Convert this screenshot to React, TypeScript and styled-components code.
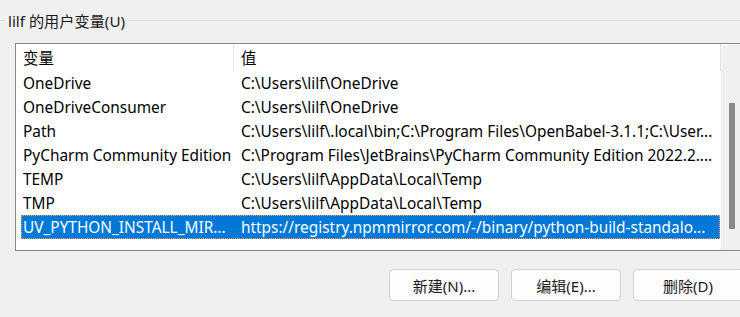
import React from 'react';
import styled, { createGlobalStyle } from 'styled-components';

const GlobalStyle = createGlobalStyle`
  html, body {
    margin: 0;
    padding: 0;
    background: #f0f0f0;
    overflow: hidden;
  }
  body {
    font-family: "Noto Sans", "Noto Sans CJK SC", sans-serif;
    color: #000;
  }
`;

interface Variable {
  name: string;
  value: string;
}

const variables: Variable[] = [
  { name: 'OneDrive', value: 'C:\\Users\\lilf\\OneDrive' },
  { name: 'OneDriveConsumer', value: 'C:\\Users\\lilf\\OneDrive' },
  { name: 'Path', value: 'C:\\Users\\lilf\\.local\\bin;C:\\Program Files\\OpenBabel-3.1.1;C:\\User...' },
  { name: 'PyCharm Community Edition', value: 'C:\\Program Files\\JetBrains\\PyCharm Community Edition 2022.2....' },
  { name: 'TEMP', value: 'C:\\Users\\lilf\\AppData\\Local\\Temp' },
  { name: 'TMP', value: 'C:\\Users\\lilf\\AppData\\Local\\Temp' },
  { name: 'UV_PYTHON_INSTALL_MIR...', value: 'https://registry.npmmirror.com/-/binary/python-build-standalo...' },
];

const App: React.FC = () => {
  const selected = 6;

  return (
    <Page>
      <GlobalStyle />
      <GroupTitle>
        <Rule $short />
        <TitleText>lilf 的用户变量(U)</TitleText>
        <Rule />
      </GroupTitle>

      <ListBox>
        <Table>
          <HeaderRow>
            <HeaderCell $width={218}>变量</HeaderCell>
            <HeaderCell $width={487}>值</HeaderCell>
          </HeaderRow>
          {variables.map((v, i) => (
            <Row key={v.name} $selected={i === selected}>
              <NameCell>{v.name}</NameCell>
              <ValueCell>{v.value}</ValueCell>
            </Row>
          ))}
        </Table>
        <ScrollTrack>
          <ScrollThumb />
        </ScrollTrack>
      </ListBox>

      <ButtonBar>
        <Button>新建(N)...</Button>
        <Button>编辑(E)...</Button>
        <Button>删除(D)</Button>
      </ButtonBar>
    </Page>
  );
};

export default App;

const Page = styled.div`
  width: 760px;
  height: 317px;
  display: flex;
  flex-direction: column;
`;

const GroupTitle = styled.div`
  display: flex;
  align-items: center;
  height: 20px;
  margin-top: 10px;
`;

const Rule = styled.div<{ $short?: boolean }>`
  height: 1px;
  background: #dcdcdc;
  width: ${(p) => (p.$short ? '5px' : 'auto')};
  flex: ${(p) => (p.$short ? '0 0 5px' : '1')};
  margin-top: 0;
`;

const TitleText = styled.span`
  font-size: 15.2px;
  line-height: 20px;
  padding: 1px 3px 0;
  color: #1a1a1a;
`;

const ListBox = styled.div`
  margin: 13px 0 0 15px;
  width: 726px;
  height: 206px;
  border: 1px solid #828790;
  background: #fff;
  display: flex;
`;

const Table = styled.div`
  width: 705px;
  display: flex;
  flex-direction: column;
`;

const HeaderRow = styled.div`
  display: flex;
  height: 27px;
`;

const HeaderCell = styled.div<{ $width: number }>`
  width: ${(p) => p.$width}px;
  flex: none;
  box-sizing: border-box;
  padding: 2px 0 0 7px;
  font-size: 15.4px;
  line-height: 25px;
  border-right: 1px solid #e5e5e5;
`;

const Row = styled.div<{ $selected?: boolean }>`
  display: flex;
  height: 24px;
  margin-left: 5px;
  width: 699px;
  box-sizing: border-box;
  padding-top: 1px;
  font-size: 15.4px;
  line-height: 22px;
  border: 1px ${(p) => (p.$selected ? 'dotted #f4a35a' : 'solid transparent')};
  background: ${(p) => (p.$selected ? '#0078d7' : 'transparent')};
  color: ${(p) => (p.$selected ? '#fff' : '#000')};
`;

const NameCell = styled.div`
  width: 217px;
  flex: none;
  padding-left: 1px;
  white-space: nowrap;
  overflow: hidden;
`;

const ValueCell = styled.div`
  flex: 1;
  padding-left: 1px;
  white-space: nowrap;
  overflow: hidden;
`;

const ScrollTrack = styled.div`
  flex: 1;
  background: #f0f0f0;
  margin-top: 1px;
  display: flex;
  justify-content: flex-start;
  padding-left: 8px;
`;

const ScrollThumb = styled.div`
  width: 6px;
  height: 126px;
  margin-top: 58px;
  background: #8a8a8a;
`;

const ButtonBar = styled.div`
  display: flex;
  gap: 12px;
  margin: 18px 0 0 389px;
`;

const Button = styled.button`
  width: 110px;
  height: 32px;
  box-sizing: border-box;
  border: 1px solid #d0d0d0;
  border-radius: 4px;
  background: #fdfdfd;
  font-family: "Noto Sans", "Noto Sans CJK SC", sans-serif;
  font-size: 15px;
  color: #1a1a1a;
  padding: 0;
`;
